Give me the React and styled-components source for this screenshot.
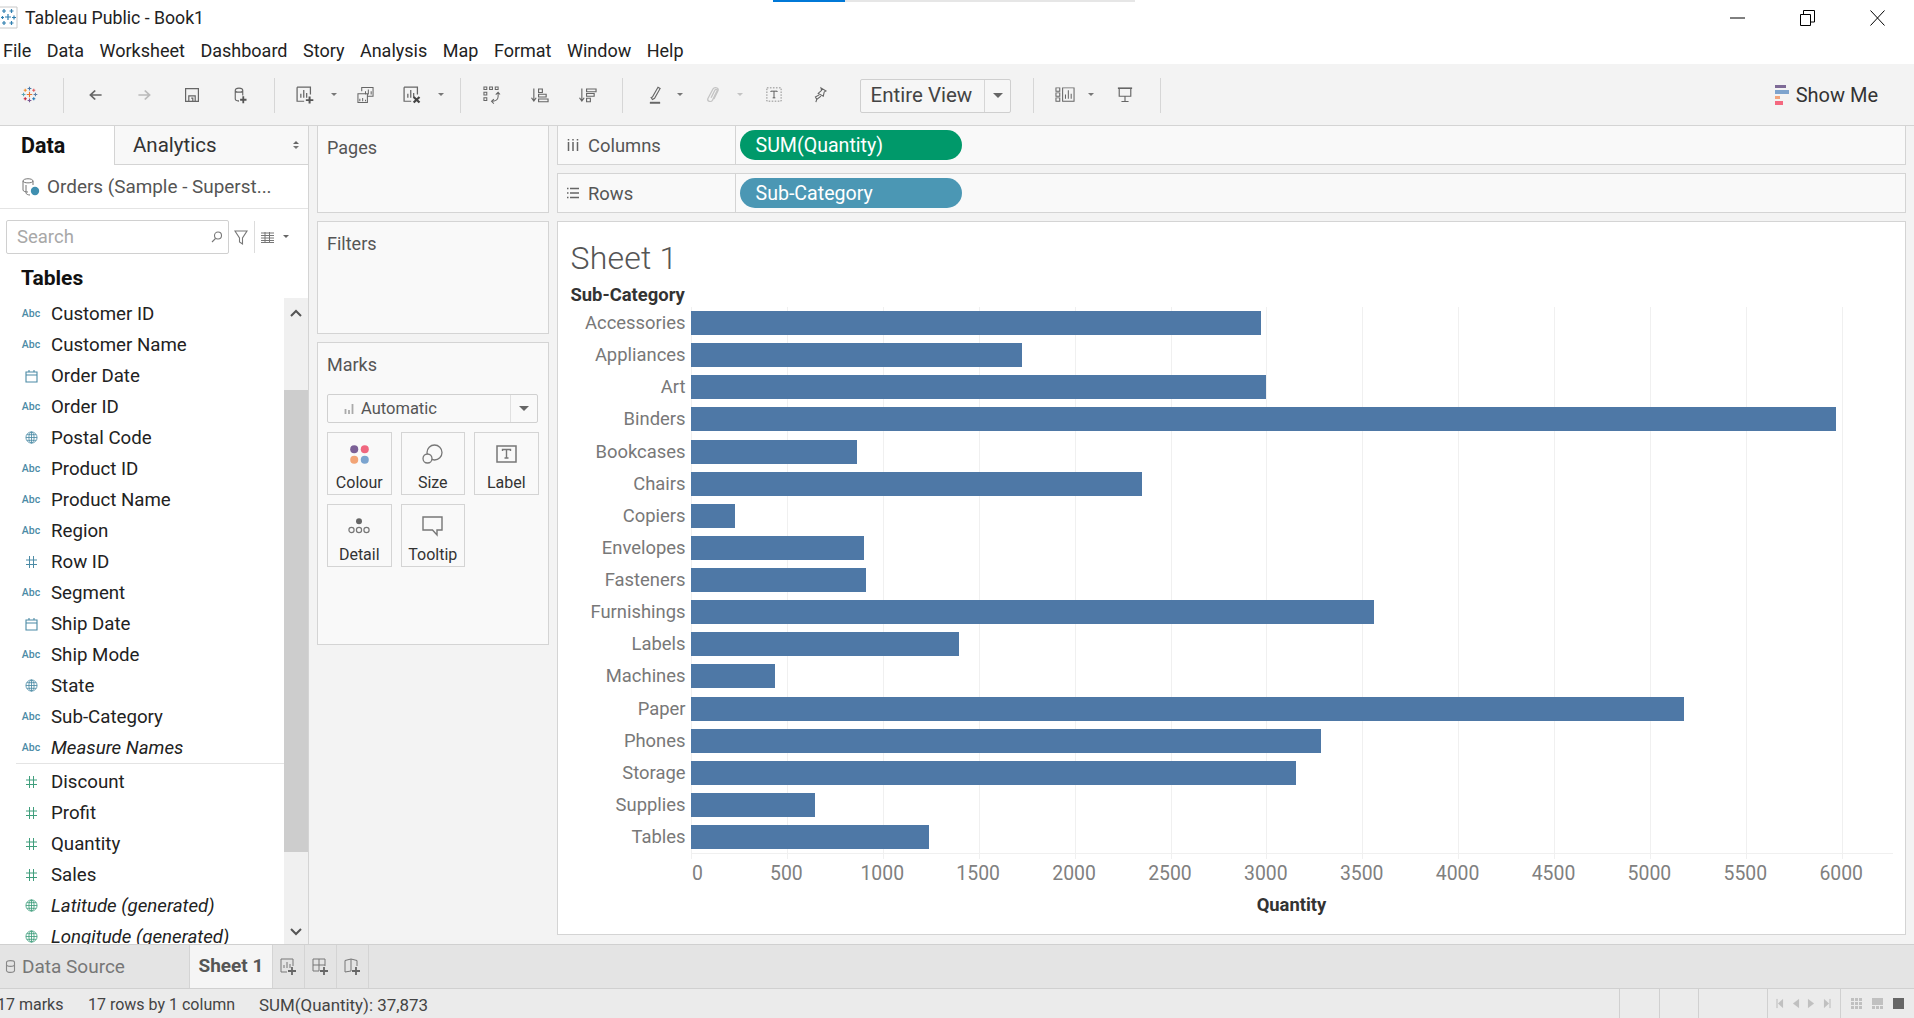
import React from "react";
import styled, { createGlobalStyle } from "styled-components";

const UNIT = 95.9 / 500;

const GlobalStyle = createGlobalStyle`
  html, body {
    margin: 0;
    padding: 0;
    background: #fff;
    overflow: hidden;
  }
  * {
    box-sizing: border-box;
  }
  body {
    font-family: Roboto, "Liberation Sans", sans-serif;
    color: #333;
  }
`;

const Page = styled.div`
  width: 1914px;
  height: 1018px;
  display: flex;
  flex-direction: column;
  overflow: hidden;
  background: #f3f3f3;
`;

/* window chrome */
const TitleBar = styled.header`
  position: relative;
  height: 36px;
  flex: none;
  background: #fff;
  display: flex;
  align-items: center;
  padding-bottom: 1px;
`;

const Progress = styled.div`
  position: absolute;
  top: 0;
  left: 773px;
  width: 362px;
  height: 2px;
  background: #e6e6e6;

  &::before {
    content: "";
    display: block;
    width: 72px;
    height: 100%;
    background: #0078d7;
  }
`;

const AppIconBox = styled.div`
  width: 19px;
  height: 25px;
  margin-right: 6px;
  display: flex;
  align-items: center;
`;

const WindowTitle = styled.span`
  font-size: 17.7px;
  color: #222;
`;

const WindowButtons = styled.div`
  margin-left: auto;
  display: flex;
  align-items: center;
  height: 100%;
  padding-right: 29px;
  gap: 55px;
`;

const MenuBar = styled.nav`
  height: 28px;
  flex: none;
  background: #fff;
  display: flex;
  align-items: center;
  padding: 1px 0 0 3px;
  gap: 15.5px;
`;

const MenuItem = styled.span`
  font-size: 18px;
  color: #222;
`;

/* toolbar */
const Toolbar = styled.div`
  height: 61px;
  flex: none;
  background: #f3f3f3;
  display: flex;
  align-items: flex-start;
  padding-top: 14px;
`;

const ToolGroup = styled.div`
  height: 35px;
  display: flex;
  align-items: center;
  padding: 0 ${(p) => p.$right}px 0 ${(p) => p.$left}px;
  border-right: 1px solid #d6d6d6;
`;

const ToolButton = styled.div`
  width: ${(p) => p.$w}px;
  height: 100%;
  flex: none;
  display: flex;
  align-items: center;
  justify-content: center;
  padding-bottom: 2px;
`;

const Caret = styled.span`
  width: 0;
  height: 0;
  flex: none;
  border-left: ${(p) => p.$size || 3}px solid transparent;
  border-right: ${(p) => p.$size || 3}px solid transparent;
  border-top: ${(p) => p.$size || 3}px solid ${(p) => p.$color || "#777"};
`;

const ViewSelect = styled.div`
  width: 151.5px;
  height: 34px;
  margin-left: 25.5px;
  display: flex;
  border: 1px solid #cfcfcf;
  border-radius: 2px;
  background: #f6f6f6;
`;

const ViewSelectText = styled.span`
  flex: 1;
  padding-left: 10px;
  font-size: 20.5px;
  line-height: 31px;
  color: #444;
`;

const ViewSelectArrow = styled.span`
  width: 26px;
  display: flex;
  align-items: center;
  justify-content: center;
  border-left: 1px solid #d6d6d6;
`;

const ShowMe = styled.div`
  margin-left: auto;
  height: 35px;
  padding: 0 36px 2px 0;
  display: flex;
  align-items: center;
  gap: 7px;
  font-size: 20px;
  color: #333;
`;

const ShowMeBars = styled.div`
  display: flex;
  flex-direction: column;
  gap: 2px;
`;

const ShowMeBar = styled.span`
  display: block;
  height: 3.5px;
  width: ${(p) => p.$w}px;
  background: ${(p) => p.$color};
`;

/* main work area */
const Main = styled.main`
  flex: 1;
  min-height: 0;
  display: flex;
  border-top: 1px solid #d4d4d4;
`;

const DataPane = styled.aside`
  width: 309px;
  flex: none;
  display: flex;
  flex-direction: column;
  background: #fff;
  border-right: 1px solid #d4d4d4;
  overflow: hidden;
`;

const PaneTabs = styled.div`
  height: 39px;
  flex: none;
  display: flex;
`;

const DataTab = styled.div`
  width: 114px;
  padding-left: 21px;
  font-size: 21.5px;
  font-weight: 700;
  line-height: 39px;
  color: #111;
`;

const AnalyticsTab = styled.div`
  flex: 1;
  display: flex;
  align-items: center;
  justify-content: space-between;
  padding: 0 9px 0 18px;
  background: #f8f8f8;
  border-left: 1px solid #d4d4d4;
  border-bottom: 1px solid #d4d4d4;
  font-size: 20.5px;
  color: #333;
`;

const UpDown = styled.span`
  display: flex;
  flex-direction: column;
  gap: 2px;
`;

const CaretUp = styled(Caret)`
  border-top: 0;
  border-bottom: 3px solid #666;
`;

const SourceRow = styled.div`
  height: 44px;
  flex: none;
  display: flex;
  align-items: center;
  padding-left: 22px;
  gap: 7px;
  font-size: 18.9px;
  color: #555;
  border-bottom: 1px solid #e4e4e4;
`;

const SearchRow = styled.div`
  height: 45px;
  flex: none;
  display: flex;
  align-items: flex-start;
  padding: 11px 0 0 6px;
`;

const SearchBox = styled.div`
  width: 223px;
  height: 34px;
  display: flex;
  align-items: center;
  justify-content: space-between;
  padding: 0 6px 0 10px;
  border: 1px solid #d0d0d0;
  border-radius: 2px;
  font-size: 18.5px;
  color: #a8a8a8;
`;

const SearchTools = styled.div`
  height: 34px;
  display: flex;
  align-items: center;
  margin-left: 5px;
`;

const ToolDivider = styled.span`
  width: 1px;
  height: 32px;
  margin: 0 6px 0 6px;
  background: #dcdcdc;
`;

const TablesHead = styled.div`
  height: 44px;
  flex: none;
  padding: 14px 0 0 21px;
  font-size: 21px;
  font-weight: 700;
  line-height: 20px;
  color: #111;
`;

const FieldArea = styled.div`
  flex: 1;
  min-height: 0;
  display: flex;
`;

const FieldList = styled.div`
  flex: 1;
  min-width: 0;
  overflow: hidden;
`;

const FieldRow = styled.div`
  height: 31px;
  display: flex;
  align-items: center;
  font-size: 18.7px;
  font-style: ${(p) => (p.$italic ? "italic" : "normal")};
  color: #222;
`;

const FieldIcon = styled.span`
  width: 51px;
  flex: none;
  display: flex;
  justify-content: center;
  padding-left: 11px;
`;

const AbcMark = styled.span`
  font-size: 10.5px;
  font-weight: 500;
  font-style: normal;
  color: #4b8aa5;
`;

const FieldDivider = styled.div`
  height: 1px;
  margin: 0 0 2px 16px;
  background: #e4e4e4;
`;

const ScrollTrack = styled.div`
  width: 24px;
  flex: none;
  display: flex;
  flex-direction: column;
  background: #f0f0f0;
`;

const ScrollEnd = styled.div`
  height: ${(p) => p.$h}px;
  flex: none;
  padding-top: ${(p) => p.$top}px;
  display: flex;
  justify-content: center;
`;

const ScrollThumb = styled.div`
  flex: 1;
  background: #cdcdcd;
`;

const CenterColumn = styled.div`
  width: 232px;
  flex: none;
  margin: 0 8.5px 9px 7.5px;
  display: flex;
  flex-direction: column;
`;

const Card = styled.section`
  height: ${(p) => p.$h}px;
  flex: none;
  margin-bottom: 8px;
  padding: 12px 9.5px 0;
  background: #f9f9f9;
  border: 1px solid #d4d4d4;
  border-top: ${(p) => (p.$flush ? "0" : "1px solid #d4d4d4")};
`;

const CardTitle = styled.h3`
  margin: 0;
  font-size: 18px;
  font-weight: 400;
  line-height: 20px;
  color: #555;
`;

const MarkType = styled.div`
  height: 29px;
  margin-top: 19px;
  display: flex;
  align-items: center;
  background: #f9f9f9;
  border: 1px solid #d0d0d0;
  border-radius: 2px;
`;

const MarkTypeLabel = styled.span`
  flex: 1;
  display: flex;
  align-items: center;
  padding-left: 16px;
  gap: 7px;
  font-size: 16.5px;
  color: #555;
`;

const MarkTypeArrow = styled.span`
  width: 27px;
  height: 100%;
  display: flex;
  align-items: center;
  justify-content: center;
  border-left: 1px solid #e0e0e0;
`;

const MarkGrid = styled.div`
  margin-top: 9px;
  display: grid;
  grid-template-columns: repeat(3, 64.5px);
  grid-auto-rows: 62.5px;
  gap: 9.5px 9px;
`;

const MarkCard = styled.div`
  display: flex;
  flex-direction: column;
  align-items: center;
  padding-top: 5px;
  border: 1px solid #d4d4d4;
  font-size: 16px;
  color: #333;
`;

const MarkIcon = styled.div`
  height: 32px;
  display: flex;
  align-items: center;
  margin-bottom: 3px;
`;

const RightColumn = styled.div`
  flex: 1;
  min-width: 0;
  margin-right: 8.5px;
  display: flex;
  flex-direction: column;
`;

const Shelf = styled.div`
  height: ${(p) => (p.$flush ? 39 : 40)}px;
  flex: none;
  margin-bottom: 8px;
  display: flex;
  align-items: center;
  background: #f9f9f9;
  border: 1px solid #d4d4d4;
  border-top: ${(p) => (p.$flush ? "0" : "1px solid #d4d4d4")};
`;

const ShelfLabel = styled.div`
  width: 178px;
  height: 100%;
  flex: none;
  display: flex;
  align-items: center;
  padding-left: 9px;
  gap: 9px;
  font-size: 18.4px;
  color: #555;
  border-right: 1px solid #d4d4d4;
`;

const Pill = styled.div`
  width: 222px;
  height: 30px;
  margin-left: 3.5px;
  padding-left: 16px;
  border-radius: 15px;
  font-size: 19.6px;
  line-height: 31px;
  color: #fff;
  background: ${(p) => p.$color};
`;

const ViewCard = styled.section`
  flex: 1;
  min-height: 0;
  margin-bottom: 9px;
  padding: 16px 12px 0 12.5px;
  background: #fff;
  border: 1px solid #d4d4d4;
`;

const SheetTitle = styled.h1`
  margin: 0;
  font-size: 32px;
  font-weight: 300;
  line-height: 40px;
  letter-spacing: 0.2px;
  color: #555;
`;

const AxisTitle = styled.div`
  font-size: 18.4px;
  font-weight: 700;
  line-height: 20px;
  color: #333;
`;

const RowsHead = styled(AxisTitle)`
  margin-top: 7px;
  height: 22px;
`;

const ChartBody = styled.div`
  display: flex;
`;

const CategoryColumn = styled.div`
  width: 120px;
  flex: none;
  padding-right: 5px;
`;

const CategoryLabel = styled.div`
  height: 32.125px;
  text-align: right;
  font-size: 18.4px;
  line-height: 32px;
  color: #787878;
`;

const Plot = styled.div`
  flex: 1;
  border-bottom: 1px solid #f0f0f0;
  background: repeating-linear-gradient(
    to right,
    #f0f0f0 0,
    #f0f0f0 1px,
    transparent 1px,
    transparent 95.9px
  );
`;

const PlotRow = styled.div`
  height: 32.125px;
  display: flex;
  align-items: center;
`;

const Bar = styled.div`
  height: 24px;
  background: #4e78a6;
`;

const AxisArea = styled.div`
  margin-left: 120px;
`;

const TickMarks = styled.div`
  height: 5px;
  background: repeating-linear-gradient(
    to right,
    #f0f0f0 0,
    #f0f0f0 1px,
    transparent 1px,
    transparent 95.9px
  );
`;

const TickRow = styled.div`
  display: flex;
  height: 30px;
`;

const Tick = styled.span`
  width: ${(p) => (p.$first ? 47.95 : 95.9)}px;
  flex: none;
  padding-left: ${(p) => (p.$first ? 1.5 : 0)}px;
  text-align: ${(p) => (p.$first ? "left" : "center")};
  font-size: 19.4px;
  line-height: 30px;
  color: #808080;
`;

const QuantityTitle = styled(AxisTitle)`
  margin-top: 6px;
  text-align: center;
`;

/* bottom bars */
const TabBar = styled.div`
  height: 45px;
  flex: none;
  display: flex;
  background: #e4e4e4;
  border-top: 1px solid #d0d0d0;
  border-bottom: 1px solid #d0d0d0;
`;

const DataSourceTab = styled.div`
  width: 189.5px;
  flex: none;
  display: flex;
  align-items: center;
  padding-left: 6px;
  gap: 7px;
  font-size: 19px;
  color: #777;
  border-right: 1px solid #d4d4d4;
`;

const SheetTab = styled.div`
  width: 83px;
  flex: none;
  padding-left: 9px;
  background: #f5f5f5;
  border-right: 1px solid #d4d4d4;
  font-size: 19px;
  font-weight: 700;
  line-height: 42px;
  color: #555;
`;

const NewTab = styled.div`
  width: 32px;
  flex: none;
  display: flex;
  align-items: center;
  justify-content: center;
  border-right: 1px solid #d4d4d4;
`;

const StatusBar = styled.footer`
  height: 29px;
  flex: none;
  display: flex;
  background: #ebebeb;
`;

const StatusText = styled.span`
  width: ${(p) => p.$w}px;
  flex: none;
  font-size: 16px;
  line-height: 32px;
  color: #444;
  white-space: nowrap;
`;

const MarkCount = styled(StatusText)`
  margin-left: -3px;
`;

const StatusSum = styled(StatusText)`
  font-size: 16.9px;
`;

const StatusCell = styled.div`
  width: ${(p) => p.$w}px;
  flex: none;
  display: flex;
  align-items: center;
  justify-content: ${(p) => p.$justify || "space-around"};
  padding: 0 ${(p) => p.$pad || 0}px;
  border-left: 1px solid #d0d0d0;
`;

const StatusFill = styled.div`
  flex: 1;
`;

/* drawings */
const CROSSES = [
  [10, 10, 3.2, "#e8762c"],
  [10, 3, 2.2, "#4e79a7"],
  [10, 17, 2.2, "#7b5a94"],
  [3, 10, 2.2, "#59a5b5"],
  [17, 10, 2.2, "#5f7fa5"],
  [5, 5, 1.8, "#f28e2b"],
  [15, 5, 1.8, "#e15759"],
  [5, 15, 1.8, "#c72035"],
  [15, 15, 1.8, "#1f77b4"],
];

const TableauLogo = () => (
  <svg width="17" height="17" viewBox="0 0 20 20" strokeWidth="1.3" fill="none">
    {CROSSES.map(([x, y, r, c], i) => (
      <path key={i} stroke={c} d={`M${x - r} ${y}H${x + r}M${x} ${y - r}V${y + r}`} />
    ))}
  </svg>
);

const AppIcon = () => (
  <svg width="19" height="23" viewBox="0 0 19 23" fill="none">
    <path d="M0 1H17V22H0" stroke="#c8c8c8" strokeWidth="1" fill="#fff" />
    <path
      stroke="#2f7fb0"
      strokeWidth="1.2"
      d="M5 11H11M8 8V14M9.5 5H13.5M11.5 3V7M2 5H6M4 3V7M1 11.5H4M2.5 10V13M12 11.5H16M14 9.5V13.5M2 17H6M4 15V19M9.5 17H13.5M11.5 15V19"
    />
  </svg>
);

const Line = styled.svg`
  display: block;
  flex: none;
  overflow: visible;
  fill: none;
  stroke: ${(p) => p.$color || "#666"};
  stroke-width: ${(p) => p.$sw || 1.3}px;
`;

const Icon = ({ w = 20, h = 20, vw, vh, color, sw, d, children }) => (
  <Line
    width={w}
    height={h}
    viewBox={`0 0 ${vw || w} ${vh || h}`}
    preserveAspectRatio="none"
    $color={color}
    $sw={sw}
  >
    {d && <path d={d} />}
    {children}
  </Line>
);

const TOOL_ICONS = {
  back: <Icon w={16} h={14} vw={20} vh={20} sw={2.3} d="M17 10H3M9 3.5L3 10L9 16.5" />,
  forward: <Icon w={16} h={14} vw={20} vh={20} sw={2.3} color="#bbb" d="M3 10H17M11 3.5L17 10L11 16.5" />,
  save: <Icon w={16} h={16} vw={20} vh={20} sw={1.5} d="M2 2H18V18H2ZM6 18V11H14V18M9 14H11V18" />,
  newSource: (
    <Icon w={15} h={18} vw={20} vh={21} sw={1.5} d="M3 5C3 1.5 13 1.5 13 5V11M3 5C3 8 13 8 13 5M3 5V15C3 17 6 17.5 8 17.5">
      <path d="M9.5 16H18M13.7 12V20" strokeWidth="2.4" stroke="#555" />
    </Icon>
  ),
  newSheet: (
    <Icon w={20} h={18} vw={24} vh={23} sw={1.5} d="M2.5 1.5H18.5V11M2.5 1.5V19.5H11M7 15V10M10.5 15V5M14 15V9">
      <path d="M13 18H22M17.5 13.5V22.5" strokeWidth="2.4" stroke="#555" />
    </Icon>
  ),
  duplicate: (
    <Icon w={17} h={16} vw={18} vh={19} sw={1.1} d="M5 5V0.5H17V11H11M1 8H11V18.5H1ZM9 9V5M12 9V3M15 9V5M3 14V17M6 13V17M9 15V17" />
  ),
  clear: (
    <Icon w={20} h={18} vw={24} vh={23} sw={1.5} d="M2.5 1.5H18.5V11M2.5 1.5V19.5H11M7 15V10M10.5 15V5M14 15V9">
      <path d="M14 14L21 21M21 14L14 21" strokeWidth="2.6" stroke="#444" />
    </Icon>
  ),
  swap: (
    <Icon w={17} h={18} vw={18} vh={20} sw={1.1} d="M1 1H4V4H1ZM7 1H10V4H7ZM13 1H16V4H13ZM1 7H4V10H1ZM1 13H4V16H1ZM16 7V12C16 15 13 17 9 17M11.5 14.5L9 17L11.5 19.5M13.5 9.5L16 7L18 9.5" />
  ),
  sortAsc: <Icon w={18} h={16} vw={19} vh={20} sw={1.2} d="M3 2V17M0.5 13.5L3 17.5L5.5 13.5M8 2.5H12V7H8ZM8 9H16V12.5H8ZM8 15H18V18.5H8Z" />,
  sortDesc: <Icon w={18} h={16} vw={19} vh={20} sw={1.2} d="M3 2V17M0.5 13.5L3 17.5L5.5 13.5M8 2.5H18V6H8ZM8 8H16V11.5H8ZM8 14H12V18.5H8Z" />,
  highlight: (
    <Icon w={12} h={18} vw={14} vh={22} d="M2.5 14L4 13.5L10.5 1.5L13 3L6.5 15L4 16.5Z">
      <path d="M1 20.5H13" strokeWidth="2.4" stroke="#666" />
    </Icon>
  ),
  clip: (
    <Icon w={13} h={16} vw={14} vh={20} color="#c4c4c4" sw={1.4} d="M5.5 13.5L9.5 4C10.5 2 12.5 3 11.8 5L7 16.5C5.5 19.5 1 18 2 14.5L7.5 2.5C9 -0.5 14 0.5 13 4.5L8.5 15" />
  ),
  text: (
    <Icon w={16} h={15} vw={18} vh={18} sw={1.1}>
      <rect x="1" y="1" width="16" height="16" strokeDasharray="1.8 1.6" stroke="#888" />
      <path d="M5.5 6V5H12.5V6M9 5V13M7.5 13H10.5" stroke="#555" />
    </Icon>
  ),
  pin: (
    <Icon w={13} h={16} vw={14} vh={20} sw={1.2} d="M7.5 1L13 5L11 6.2L10 11.5L4.5 8L8.2 4.2ZM5.5 9.8L1.5 12.5L3 15.5L7.5 11.5M3 15.5L2 19" />
  ),
  cards: (
    <Icon w={20} h={15} vw={21} vh={18} sw={1.1} d="M8 1H20V17H8ZM1 1H5V5H1ZM1 7H5V11H1ZM1 13H5V17H1ZM11 14V9M14 14V4M17 14V8" />
  ),
  present: (
    <Icon w={16} h={16} vw={18} vh={20} sw={1.3} d="M2.5 1.5V11.5H15.5V1.5M9 11.5V18M5 18H13">
      <path d="M1 1.5H17" strokeWidth="2" />
    </Icon>
  ),
};

const Calendar = () => (
  <Line width="13" height="14" viewBox="0 0 13 14" $color="#4b8aa5" $sw={1.1}>
    <path d="M1 3H12V13H1ZM1 6H12M4 1V3M9 1V3" />
  </Line>
);

const Hash = ({ color }) => (
  <Line width="13" height="14" viewBox="0 0 13 14" $color={color} $sw={1}>
    <path d="M1 5H12M1 9.5H12M4.5 1V13M8.5 1V13" />
  </Line>
);

const Globe = ({ color }) => (
  <Line width="13" height="13" viewBox="0 0 14 14" $color={color} $sw={0.9}>
    <circle cx="7" cy="7" r="6" />
    <path d="M1 7H13M2 4H12M2 10H12M7 1V13" />
    <ellipse cx="7" cy="7" rx="2.8" ry="6" />
  </Line>
);

const BLUE = "#4b8aa5";
const GREEN = "#3f9e7c";

const fieldIcon = (type) => {
  switch (type) {
    case "abc":
      return <AbcMark>Abc</AbcMark>;
    case "date":
      return <Calendar />;
    case "geo":
      return <Globe color={BLUE} />;
    case "num":
      return <Hash color={BLUE} />;
    case "measure":
      return <Hash color={GREEN} />;
    default:
      return <Globe color={GREEN} />;
  }
};

const DIMENSIONS = [
  ["Customer ID", "abc"],
  ["Customer Name", "abc"],
  ["Order Date", "date"],
  ["Order ID", "abc"],
  ["Postal Code", "geo"],
  ["Product ID", "abc"],
  ["Product Name", "abc"],
  ["Region", "abc"],
  ["Row ID", "num"],
  ["Segment", "abc"],
  ["Ship Date", "date"],
  ["Ship Mode", "abc"],
  ["State", "geo"],
  ["Sub-Category", "abc"],
  ["Measure Names", "abc", true],
];

const MEASURES = [
  ["Discount", "measure"],
  ["Profit", "measure"],
  ["Quantity", "measure"],
  ["Sales", "measure"],
  ["Latitude (generated)", "mgeo", true],
  ["Longitude (generated)", "mgeo", true],
];

const QUANTITIES = [
  ["Accessories", 2976],
  ["Appliances", 1729],
  ["Art", 3000],
  ["Binders", 5974],
  ["Bookcases", 868],
  ["Chairs", 2356],
  ["Copiers", 234],
  ["Envelopes", 906],
  ["Fasteners", 914],
  ["Furnishings", 3563],
  ["Labels", 1400],
  ["Machines", 440],
  ["Paper", 5178],
  ["Phones", 3289],
  ["Storage", 3158],
  ["Supplies", 647],
  ["Tables", 1241],
];

const TICKS = [0, 500, 1000, 1500, 2000, 2500, 3000, 3500, 4000, 4500, 5000, 5500, 6000];
const MENUS = ["File", "Data", "Worksheet", "Dashboard", "Story", "Analysis", "Map", "Format", "Window", "Help"];

const MARK_CARDS = [
  {
    name: "Colour",
    icon: (
      <svg width="19" height="19" viewBox="0 0 18 18">
        <circle cx="4" cy="4" r="3.8" fill="#7b6096" />
        <circle cx="14" cy="4" r="3.8" fill="#f0677f" />
        <circle cx="4" cy="14" r="3.8" fill="#f2a476" />
        <circle cx="14" cy="14" r="3.8" fill="#7ba4cf" />
      </svg>
    ),
  },
  {
    name: "Size",
    icon: (
      <Icon w={21} h={20} sw={1.3} color="#777">
        <circle cx="12.5" cy="8.5" r="7.5" />
        <circle cx="5.5" cy="14.5" r="4.5" fill="#f9f9f9" />
      </Icon>
    ),
  },
  {
    name: "Label",
    icon: (
      <Icon w={21} h={18} sw={1.5} color="#777" d="M1 1H20V17H1Z">
        <path d="M6.5 6V4.5H14.5V6M10.5 4.5V13M8.5 13H12.5" strokeWidth="1.4" />
      </Icon>
    ),
  },
  {
    name: "Detail",
    icon: (
      <svg width="22" height="16" viewBox="0 0 22 16" fill="none" stroke="#777" strokeWidth="1.2">
        <circle cx="11" cy="3.2" r="3" fill="#666" stroke="none" />
        <circle cx="3.5" cy="12" r="2.6" />
        <circle cx="11" cy="12" r="2.6" />
        <circle cx="18.5" cy="12" r="2.6" />
      </svg>
    ),
  },
  {
    name: "Tooltip",
    icon: <Icon w={21} h={20} sw={1.4} color="#777" d="M1 1H20V14H15V19L10.5 14H1Z" />,
  },
];

const BARS = QUANTITIES.map(([name, value]) => ({ name, width: value * UNIT }));

const TabPlus = () => <path d="M8 13H16M12 9V17" strokeWidth="1.8" stroke="#666" />;

const App = () => (
  <Page>
    <GlobalStyle />
    <TitleBar>
      <Progress />
      <AppIconBox>
        <AppIcon />
      </AppIconBox>
      <WindowTitle>Tableau Public - Book1</WindowTitle>
      <WindowButtons>
        <Icon w={15} h={2} sw={1} color="#000" d="M0 1H15" />
        <Icon w={15} h={16} sw={1} color="#000" d="M0.5 4.5H10.5V15.5H0.5ZM3.5 4.5V0.5H14.5V12H10.5" />
        <Icon w={15} h={16} sw={1} color="#000" d="M0.5 0.5L14.5 15.5M14.5 0.5L0.5 15.5" />
      </WindowButtons>
    </TitleBar>
    <MenuBar>
      {MENUS.map((m) => (
        <MenuItem key={m}>{m}</MenuItem>
      ))}
    </MenuBar>

    <Toolbar>
      <ToolGroup $left={19} $right={24}>
        <ToolButton $w={20}>
          <TableauLogo />
        </ToolButton>
      </ToolGroup>
      <ToolGroup $left={8} $right={10}>
        <ToolButton $w={48}>{TOOL_ICONS.back}</ToolButton>
        <ToolButton $w={48}>{TOOL_ICONS.forward}</ToolButton>
        <ToolButton $w={48}>{TOOL_ICONS.save}</ToolButton>
        <ToolButton $w={48}>{TOOL_ICONS.newSource}</ToolButton>
      </ToolGroup>
      <ToolGroup $left={8} $right={13}>
        <ToolButton $w={44}>{TOOL_ICONS.newSheet}</ToolButton>
        <ToolButton $w={14}>
          <Caret />
        </ToolButton>
        <ToolButton $w={48}>{TOOL_ICONS.duplicate}</ToolButton>
        <ToolButton $w={46}>{TOOL_ICONS.clear}</ToolButton>
        <ToolButton $w={12}>
          <Caret />
        </ToolButton>
      </ToolGroup>
      <ToolGroup $left={8} $right={13}>
        <ToolButton $w={44}>{TOOL_ICONS.swap}</ToolButton>
        <ToolButton $w={54}>{TOOL_ICONS.sortAsc}</ToolButton>
        <ToolButton $w={42}>{TOOL_ICONS.sortDesc}</ToolButton>
      </ToolGroup>
      <ToolGroup $left={13} $right={22}>
        <ToolButton $w={38}>{TOOL_ICONS.highlight}</ToolButton>
        <ToolButton $w={12}>
          <Caret />
        </ToolButton>
        <ToolButton $w={52}>{TOOL_ICONS.clip}</ToolButton>
        <ToolButton $w={4}>
          <Caret $color="#c4c4c4" />
        </ToolButton>
        <ToolButton $w={64}>{TOOL_ICONS.text}</ToolButton>
        <ToolButton $w={28}>{TOOL_ICONS.pin}</ToolButton>
        <ViewSelect>
          <ViewSelectText>Entire View</ViewSelectText>
          <ViewSelectArrow>
            <Caret $size={5} $color="#666" />
          </ViewSelectArrow>
        </ViewSelect>
      </ToolGroup>
      <ToolGroup $left={8} $right={2.5}>
        <ToolButton $w={46}>{TOOL_ICONS.cards}</ToolButton>
        <ToolButton $w={5}>
          <Caret />
        </ToolButton>
        <ToolButton $w={64}>{TOOL_ICONS.present}</ToolButton>
      </ToolGroup>
      <ShowMe>
        <ShowMeBars>
          <ShowMeBar $w={11} $color="#7e6a96" />
          <ShowMeBar $w={14} $color="#7da3cd" />
          <ShowMeBar $w={5} $color="#f3a47c" />
          <ShowMeBar $w={8} $color="#f4687f" />
        </ShowMeBars>
        Show Me
      </ShowMe>
    </Toolbar>

    <Main>
      <DataPane>
        <PaneTabs>
          <DataTab>Data</DataTab>
          <AnalyticsTab>
            Analytics
            <UpDown>
              <CaretUp />
              <Caret />
            </UpDown>
          </AnalyticsTab>
        </PaneTabs>
        <SourceRow>
          <Icon w={18} h={20} sw={1} color="#777" d="M1 4C1 1 11 1 11 4V8M1 4C1 6.5 11 6.5 11 4M1 4V13C1 14.5 4 15 6 15M4 8V16C4 17 6 18 8 18">
            <circle cx="13" cy="14" r="4.2" fill="#3f8fb0" stroke="none" />
          </Icon>
          Orders (Sample - Superst...
        </SourceRow>
        <SearchRow>
          <SearchBox>
            Search
            <Icon w={11} h={12} sw={1.1} color="#777" d="M4.5 7.5L1 11">
              <circle cx="7" cy="4.5" r="3.5" />
            </Icon>
          </SearchBox>
          <SearchTools>
            <Icon w={14} h={15} sw={1.1} color="#777" d="M1 1H13L8.5 8V14L5.5 12V8Z" />
            <ToolDivider />
            <Icon w={13} h={11} sw={1} color="#777" d="M0 1H13M0 3.5H13M0 6H13M0 8.5H13M0 10.5H13M4 0V11M8.5 0V11" />
            <ToolButton $w={24}>
              <Caret $size={3.5} $color="#666" />
            </ToolButton>
          </SearchTools>
        </SearchRow>
        <TablesHead>Tables</TablesHead>
        <FieldArea>
          <FieldList>
            {DIMENSIONS.map(([name, type, italic]) => (
              <FieldRow key={name} $italic={italic}>
                <FieldIcon>{fieldIcon(type)}</FieldIcon>
                {name}
              </FieldRow>
            ))}
            <FieldDivider />
            {MEASURES.map(([name, type, italic]) => (
              <FieldRow key={name} $italic={italic}>
                <FieldIcon>{fieldIcon(type)}</FieldIcon>
                {name}
              </FieldRow>
            ))}
          </FieldList>
          <ScrollTrack>
            <ScrollEnd $h={92} $top={11}>
              <Icon w={12} h={8} sw={2} color="#555" d="M1 7L6 2L11 7" />
            </ScrollEnd>
            <ScrollThumb />
            <ScrollEnd $h={92} $top={76}>
              <Icon w={12} h={8} sw={2} color="#555" d="M1 1L6 6L11 1" />
            </ScrollEnd>
          </ScrollTrack>
        </FieldArea>
      </DataPane>

      <CenterColumn>
        <Card $h={87} $flush>
          <CardTitle>Pages</CardTitle>
        </Card>
        <Card $h={113}>
          <CardTitle>Filters</CardTitle>
        </Card>
        <Card $h={303}>
          <CardTitle>Marks</CardTitle>
          <MarkType>
            <MarkTypeLabel>
              <Icon w={10} h={11} sw={1.8} color="#aaa" d="M1.5 11V6M5 11V7M8.5 11V1" />
              Automatic
            </MarkTypeLabel>
            <MarkTypeArrow>
              <Caret $size={5} $color="#666" />
            </MarkTypeArrow>
          </MarkType>
          <MarkGrid>
            {MARK_CARDS.map((c) => (
              <MarkCard key={c.name}>
                <MarkIcon>{c.icon}</MarkIcon>
                {c.name}
              </MarkCard>
            ))}
          </MarkGrid>
        </Card>
      </CenterColumn>

      <RightColumn>
        <Shelf $flush>
          <ShelfLabel>
            <Icon w={12} h={12} sw={1.5} color="#666" d="M1.5 3V12M6 3V12M10.5 3V12M1.5 0V1.5M6 0V1.5M10.5 0V1.5" />
            Columns
          </ShelfLabel>
          <Pill $color="#00996a">SUM(Quantity)</Pill>
        </Shelf>
        <Shelf>
          <ShelfLabel>
            <Icon w={12} h={12} sw={1.5} color="#666" d="M3 1.5H12M3 6H12M3 10.5H12M0 1.5H1.5M0 6H1.5M0 10.5H1.5" />
            Rows
          </ShelfLabel>
          <Pill $color="#4b97b4">Sub-Category</Pill>
        </Shelf>
        <ViewCard>
          <SheetTitle>Sheet 1</SheetTitle>
          <RowsHead>Sub-Category</RowsHead>
          <ChartBody>
            <CategoryColumn>
              {BARS.map((b) => (
                <CategoryLabel key={b.name}>{b.name}</CategoryLabel>
              ))}
            </CategoryColumn>
            <Plot>
              {BARS.map((b) => (
                <PlotRow key={b.name}>
                  <Bar style={{ width: b.width }} />
                </PlotRow>
              ))}
            </Plot>
          </ChartBody>
          <AxisArea>
            <TickMarks />
            <TickRow>
              {TICKS.map((t, i) => (
                <Tick key={t} $first={i === 0}>
                  {t}
                </Tick>
              ))}
            </TickRow>
            <QuantityTitle>Quantity</QuantityTitle>
          </AxisArea>
        </ViewCard>
      </RightColumn>
    </Main>

    <TabBar>
      <DataSourceTab>
        <Icon w={9} h={13} sw={1.1} color="#888" d="M0.5 2.5C0.5 0 8.5 0 8.5 2.5V10.5C8.5 13 0.5 13 0.5 10.5ZM0.5 4.5C0.5 7 8.5 7 8.5 4.5" />
        Data Source
      </DataSourceTab>
      <SheetTab>Sheet 1</SheetTab>
      <NewTab>
        <Icon w={17} h={17} sw={1} color="#777" d="M1 1H13V8M1 1V14H7M4 10V7M7 10V4M10 10V6">
          <TabPlus />
        </Icon>
      </NewTab>
      <NewTab>
        <Icon w={17} h={17} sw={1} color="#777" d="M1 1H13V8M1 1V13H7M1 7H13M7 1V13">
          <TabPlus />
        </Icon>
      </NewTab>
      <NewTab>
        <Icon w={17} h={17} sw={1} color="#777" d="M1 2.5L7 1L13 2.5V8M1 2.5V14L7 13M7 1V13">
          <TabPlus />
        </Icon>
      </NewTab>
    </TabBar>

    <StatusBar>
      <MarkCount $w={91}>17 marks</MarkCount>
      <StatusText $w={171}>17 rows by 1 column</StatusText>
      <StatusSum $w={200}>SUM(Quantity): 37,873</StatusSum>
      <StatusFill />
      <StatusCell $w={39.5} />
      <StatusCell $w={39} />
      <StatusCell $w={69} />
      <StatusCell $w={73} $pad={4}>
        <Icon w={7} h={9} sw={0.1} color="#c0c0c0"><path d="M7 0V9L2 4.5ZM0.5 0H1.5V9H0.5Z" fill="#c0c0c0" /></Icon>
        <Icon w={6} h={9} sw={0.1} color="#c0c0c0"><path d="M6 0V9L0 4.5Z" fill="#c0c0c0" /></Icon>
        <Icon w={6} h={9} sw={0.1} color="#c0c0c0"><path d="M0 0V9L6 4.5Z" fill="#c0c0c0" /></Icon>
        <Icon w={7} h={9} sw={0.1} color="#c0c0c0"><path d="M0 0V9L5 4.5ZM5.5 0H6.5V9H5.5Z" fill="#c0c0c0" /></Icon>
      </StatusCell>
      <StatusCell $w={74.5} $justify="space-between" $pad={10}>
        <svg width="11" height="11" viewBox="0 0 11 11" fill="#c0c0c0">
          <path d="M0 0H3V3H0ZM4 0H7V3H4ZM8 0H11V3H8ZM0 4H3V7H0ZM4 4H7V7H4ZM8 4H11V7H8ZM0 8H3V11H0ZM4 8H7V11H4ZM8 8H11V11H8Z" />
        </svg>
        <svg width="11" height="11" viewBox="0 0 11 11" fill="#c0c0c0">
          <path d="M0 0H11V7H0ZM0 8H3V11H0ZM4 8H7V11H4ZM8 8H11V11H8Z" />
        </svg>
        <svg width="11" height="11" viewBox="0 0 11 11" fill="#666">
          <path d="M0 0H11V11H0Z" />
        </svg>
      </StatusCell>
    </StatusBar>
  </Page>
);

export default App;
